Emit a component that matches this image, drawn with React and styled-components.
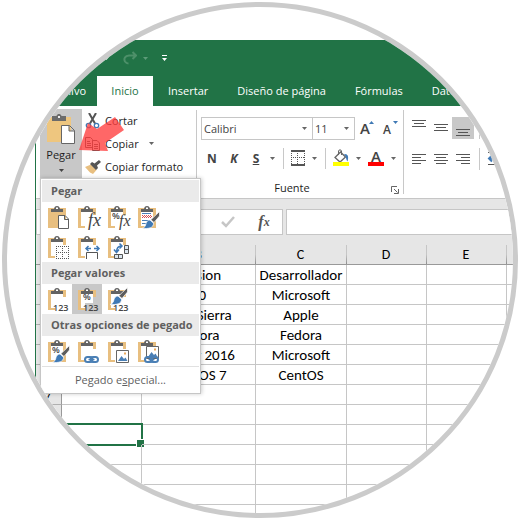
import React from "react";
import styled, { createGlobalStyle } from "styled-components";

const commands = [
    { label: "Cortar", icon: "cut" },
    { label: "Copiar", icon: "copy", hasMenu: true },
    { label: "Copiar formato", icon: "format" },
];

const pasteGroups = [
    {
        title: "Pegar",
        options: [
            { name: "Pegar todo", icon: "paste" },
            { name: "Fórmulas", icon: "formulas" },
            { name: "Formato de números y fórmulas", icon: "numberFormulas" },
            { name: "Mantener formato de origen", icon: "source" },
            { name: "Sin bordes", icon: "noBorders" },
            { name: "Mantener ancho de columnas", icon: "widths" },
            { name: "Transponer", icon: "transpose" },
        ],
    },
    {
        title: "Pegar valores",
        options: [
            { name: "Valores", icon: "values" },
            { name: "Formato de números y valores", icon: "numberValues", selected: true },
            { name: "Formato de valores y origen", icon: "sourceValues" },
        ],
    },
    {
        title: "Otras opciones de pegado",
        options: [
            { name: "Formato", icon: "formatting" },
            { name: "Pegar vínculo", icon: "link" },
            { name: "Imagen", icon: "picture" },
            { name: "Imagen vinculada", icon: "linkedPicture" },
        ],
    },
];

const columns = ["A", "B", "C", "D", "E", "F"];
const widths = [26, 80, 114, 91, 80, 80, 80];

const rows = [
    ["Sistema", "Version", "Desarrollador"],
    ["Windows", "10", "Microsoft"],
    ["macOS", "OS X Sierra", "Apple"],
    ["Linux", "Fedora", "Fedora"],
    ["Windows", "Server 2016", "Microsoft"],
    ["Linux", "CentOS 7", "CentOS"],
    [], [], [], [], [], [], [],
];

const Caret = ({ color = "#666" }) => (
    <svg width="5" height="3" viewBox="0 0 5 3" aria-hidden="true">
        <path d="M0 0h5L2.5 3z" fill={color} />
    </svg>
);

const Brush = () => (
    <g stroke="#fff" strokeWidth=".7">
        <path d="M27.500 9.500v4.500L22 20.500 18.800 17.800z" fill="#5c5c5c" />
        <path d="M18 18l3.500 3.200c.4 4.500-5 5.800-11.500 5.300 3-1 3.500-2.500 4-5 .5-2 2-3.500 4-3.500z" fill="#3f79b5" />
    </g>
);

const Chain = () => (
    <g fill="none" stroke="#4a7fb5" strokeWidth="2">
        <rect x="13" y="21" width="7.500" height="5" rx="2.500" />
        <rect x="18.500" y="21" width="7.500" height="5" rx="2.500" />
        <path d="M16.500 23.500h6" strokeWidth="1.500" />
    </g>
);

const Picture = ({ y = 14 }) => (
    <g transform={`translate(0 ${y - 14})`}>
        <path d="M14.500 14.500h12v12h-12z" fill="#fff" stroke="#666" />
        <path d="M16 25l3.500-5 2.500 3 1.500-1.500L25.500 25z" fill="#4a7fb5" />
        <path d="M22 16.500h2v2h-2z" fill="#eaa95c" />
    </g>
);

const SheetCorner = () => (
    <path d="M16.500 13.500h6.500l3.500 3.500v9.500h-10zM22.500 13.500v4h4" fill="#fff" stroke="#5f5f5f" />
);

const IconText = styled.text`
    font-family: ${({ $serif }) => ($serif ? '"Liberation Serif", serif' : '"Open Sans", sans-serif')};
    font-size: ${({ $size }) => $size}px;
    font-style: ${({ $serif }) => ($serif ? "italic" : "normal")};
    font-weight: ${({ $serif }) => ($serif ? 400 : 600)};
    fill: #444;
`;

const optionArt = {
    paste: <SheetCorner />,
    formulas: <IconText $serif $size={18} x="16" y="24">fx</IconText>,
    numberFormulas: (
        <>
            <IconText $size={9} x="10" y="17">%</IconText>
            <IconText $serif $size={16} x="17" y="24">fx</IconText>
        </>
    ),
    source: (
        <>
            <path d="M10 11.500h9M10 18.500h8M10 21.500h4" stroke="#4a7fb5" />
            <path d="M10 13.500h9M10 15.500h9" stroke="#d94f4f" strokeDasharray="1 1" />
            <path d="M11 14.500h9" stroke="#d94f4f" strokeDasharray="1 1" />
            <Brush />
        </>
    ),
    noBorders: (
        <path
            d="M14.500 14v13M20.500 14v13M26.500 14v13M14 14.500h13M14 20.500h13M14 26.500h13"
            stroke="#555"
            strokeDasharray="1 1"
        />
    ),
    widths: (
        <>
            <path d="M14.500 27v-6.500h11V27" fill="#fff" stroke="#555" />
            <path d="M14 16.500h5M22 16.500h5M16.500 14l-2.500 2.500 2.500 2.500M24.500 14l2.500 2.500-2.500 2.500" fill="none" stroke="#3f79b5" strokeWidth="1.500" />
        </>
    ),
    transpose: (
        <>
            <path d="M22.500 13.500h4v8h-4zM22.500 17.500h4" fill="#dbe6ef" stroke="#555" />
            <path d="M12.500 22.500h8v4h-8zM16.500 22.500v4" fill="#dbe6ef" stroke="#555" />
            <path d="M14.500 20.500c0-4 1-6.500 5-6.500M17.500 11.500l2.500 2.500-2.500 2.500M12 17.500l2.500 3 2.500-3" fill="none" stroke="#3f79b5" strokeWidth="1.500" />
        </>
    ),
    values: <IconText $size={9} x="11" y="27">123</IconText>,
    numberValues: (
        <>
            <IconText $size={9} x="11" y="16">%</IconText>
            <IconText $size={9} x="11" y="27">123</IconText>
        </>
    ),
    sourceValues: (
        <>
            <g transform="translate(-2 -6)"><Brush /></g>
            <IconText $size={9} x="11" y="27">123</IconText>
        </>
    ),
    formatting: (
        <>
            <IconText $size={9} x="10" y="17">%</IconText>
            <Brush />
        </>
    ),
    link: <Chain />,
    picture: <Picture />,
    linkedPicture: (
        <>
            <Picture y={10} />
            <Chain />
        </>
    ),
};

// Options whose drawing fills the whole board keep its lower right corner
const wholeBoards = ["source", "formatting"];

const OptionIcon = ({ name, selected }) => (
    <svg width="30" height="30" viewBox="0 0 30 30" aria-hidden="true">
        <path d="M6 6h18v20H6z" fill="#e8bf80" />
        {name !== "paste" && <path d="M9 8h12v16H9z" fill="#fff" />}
        {name !== "paste" && !wholeBoards.includes(name) && (
            <>
                <path d="M13 18h14v9H13z" fill={selected ? "#c8c8c8" : "#fff"} />
                <path d="M20 13h7v14h-7z" fill={selected ? "#c8c8c8" : "#fff"} />
            </>
        )}
        {selected && <path d="M9 8h12v11H9z" fill="#fff" />}
        <path d="M9 10V7h3c.3-2 1.200-3 3-3s2.700 1 3 3h3v3z" fill="#636363" />
        <path d="M14 5.500h2V7h-2z" fill="#fff" />
        {optionArt[name]}
    </svg>
);

const CommandIcon = ({ name }) => (
    <svg width="16" height="16" viewBox="0 0 16 16" aria-hidden="true">
        {name === "cut" && (
            <>
                <path d="M4 0 10 10.500M11 0 5 10.500" stroke="#555" strokeWidth="2" />
                <circle cx="3.500" cy="12.500" r="2.200" fill="none" stroke="#3f79b5" strokeWidth="1.300" />
                <circle cx="11.500" cy="12.500" r="2.200" fill="none" stroke="#3f79b5" strokeWidth="1.300" />
            </>
        )}
        {name === "copy" && (
            <>
                <path d="M.5 1.500h5l2 2v8h-7z" fill="#fff" stroke="#555" />
                <path d="M7.500 4.500h4.500l2.500 2.500v7.500h-7z" fill="#fff" stroke="#555" />
                <path d="M2 5.500h3M2 7.500h4M2 9.500h4M9 8.500h4M9 10.500h4M9 12.500h4" stroke="#555" />
            </>
        )}
        {name === "format" && (
            <>
                <path d="M0 8 6 5.500l5.500 5.500-3.500 4L5 13.500z" fill="#e8bf80" />
                <path d="M5 5l2-2 2.500 1.500L14 1l2 2-4 3.500L13 9l-2 2z" fill="#555" />
            </>
        )}
    </svg>
);

const LetterIcon = ({ size, up }) => (
    <svg width="20" height="22" viewBox="0 0 20 22" aria-hidden="true">
        <IconText $size={size} x={up ? 3 : 2} y="17">A</IconText>
        <path d={up ? "M12 7h5l-2.500-3z" : "M12 4h5l-2.500 3z"} fill="#3f79b5" />
    </svg>
);

const LinesIcon = ({ d }) => (
    <svg width="22" height="22" viewBox="0 0 22 22" aria-hidden="true">
        <path d={d} stroke="#555" />
    </svg>
);

const PasteMenu = () => (
    <StMenu>
        {pasteGroups.map(({ title, options }) => (
            <section key={title}>
                <StMenuTitle>{title}</StMenuTitle>
                <StOptions>
                    {options.map(({ name, icon, selected }) => (
                        <StOption key={icon} title={name} aria-label={name} $selected={selected}>
                            <OptionIcon name={icon} selected={selected} />
                        </StOption>
                    ))}
                </StOptions>
            </section>
        ))}
        <StSpecial>Pegado e<u>s</u>pecial...</StSpecial>
    </StMenu>
);

const Clipboard = () => (
    <StClipboard>
        <StPasteWrap>
            <StPaste>
                <svg width="30" height="32" viewBox="0 0 30 32" aria-hidden="true">
                    <path d="M1 4h24v25H1z" fill="#eec67f" />
                    <path d="M6 8V3h4.500c.5-1.500 1.500-2 2.500-2s2 .5 2.500 2H20v5z" fill="#6b6b6b" />
                    <path d="M12 3h2v2h-2z" fill="#eee" />
                    <path d="M15.500 12.500h8l5 5v13h-13zM23 12.500V18h5.500" fill="#fff" stroke="#666" />
                </svg>
                <span>Pegar</span>
                <Caret color="#444" />
            </StPaste>
            <PasteMenu />
            <StArrow width="47" height="36" viewBox="0 0 47 36" aria-hidden="true">
                <path d="M0 34 9 7l9 6L36 1l9 13-19 13 3 8z" fill="#ff3c3c" fillOpacity=".78" />
            </StArrow>
        </StPasteWrap>
        <StCommands>
            {commands.map(({ label, icon, hasMenu }) => (
                <StCommand key={label}>
                    <CommandIcon name={icon} />
                    <span>{label}</span>
                    {hasMenu && <StCommandCaret><Caret /></StCommandCaret>}
                </StCommand>
            ))}
        </StCommands>
    </StClipboard>
);

const FontGroup = () => (
    <StGroup>
        <StRow>
            <StSelectBox $width={112}>
                <StSelect aria-label="Fuente"><option>Calibri</option></StSelect>
                <Caret />
            </StSelectBox>
            <StSelectBox $width={43} $joined>
                <StSelect aria-label="Tamaño de fuente"><option>11</option></StSelect>
                <Caret />
            </StSelectBox>
            <StTool $width={24} aria-label="Aumentar tamaño de fuente"><LetterIcon size={15} up /></StTool>
            <StTool $width={24} aria-label="Disminuir tamaño de fuente"><LetterIcon size={12} /></StTool>
        </StRow>
        <StRow>
            <StTool aria-label="Negrita"><b>N</b></StTool>
            <StTool aria-label="Cursiva"><b><i>K</i></b></StTool>
            <StTool aria-label="Subrayado"><b><u>S</u></b></StTool>
            <StTool $width={11} aria-label="Opciones de subrayado"><Caret /></StTool>
            <StRowDivider />
            <StTool aria-label="Bordes">
                <svg width="14" height="16" viewBox="0 0 14 16" aria-hidden="true">
                    <path d="M0 1h14M0 15h14" stroke="#555" strokeWidth="2" />
                    <path d="M.5 3v11M6.500 3v11M13.500 3v11M0 7.500h14" stroke="#555" strokeDasharray="1 1" />
                </svg>
            </StTool>
            <StTool $width={11} aria-label="Opciones de bordes"><Caret /></StTool>
            <StRowDivider />
            <StTool $width={24} aria-label="Color de relleno">
                <svg width="18" height="18" viewBox="0 0 18 18" aria-hidden="true">
                    <path d="M3 8.500 8.500 3l5 5L8 13z" fill="#fff" stroke="#666" strokeWidth="1.300" />
                    <path d="M6.500 6V2c0-1.500 3-1.500 3 0v4" fill="none" stroke="#666" />
                    <path d="M12 5c4-.5 5 2.500 3.500 7.500C14 11 14.500 8 12 5z" fill="#3f79b5" />
                    <path d="M1 13h16v4H1z" fill="#ff0" />
                </svg>
            </StTool>
            <StTool $width={11} aria-label="Opciones de relleno"><Caret /></StTool>
            <StTool $width={24} aria-label="Color de fuente">
                <svg width="18" height="18" viewBox="0 0 18 18" aria-hidden="true">
                    <IconText $size={15} x="4" y="13">A</IconText>
                    <path d="M1 13h16v4H1z" fill="red" />
                </svg>
            </StTool>
            <StTool $width={11} aria-label="Opciones de color"><Caret /></StTool>
        </StRow>
        <StGroupFooter>
            <span>Fuente</span>
            <StLauncher aria-label="Configuración de fuente">
                <svg width="8" height="8" viewBox="0 0 8 8" aria-hidden="true">
                    <path d="M.5 6V.5H6M3 3l3.500 3.500M7.500 3v4.500H3" fill="none" stroke="#666" />
                </svg>
            </StLauncher>
        </StGroupFooter>
    </StGroup>
);

const AlignGroup = () => (
    <StGroup>
        <StRow>
            <StTool aria-label="Alinear en la parte superior"><LinesIcon d="M4 3.500h14M6 6.500h10M4 9.500h14" /></StTool>
            <StTool aria-label="Alinear en el medio"><LinesIcon d="M4 7.500h14M6 10.500h10M4 13.500h14" /></StTool>
            <StTool $active aria-label="Alinear en la parte inferior"><LinesIcon d="M4 12.500h14M6 15.500h10M4 18.500h14" /></StTool>
            <StRowDivider />
        </StRow>
        <StRow>
            <StTool aria-label="Alinear a la izquierda"><LinesIcon d="M4 6.500h14M4 9.500h9M4 12.500h14M4 15.500h9" /></StTool>
            <StTool aria-label="Centrar"><LinesIcon d="M4 6.500h14M6 9.500h10M4 12.500h14M6 15.500h10" /></StTool>
            <StTool aria-label="Alinear a la derecha"><LinesIcon d="M4 6.500h14M9 9.500h9M4 12.500h14M9 15.500h9" /></StTool>
            <StRowDivider />
            <StTool aria-label="Disminuir sangría">
                <svg width="16" height="14" viewBox="0 0 16 14" aria-hidden="true">
                    <path d="M2 .5h14M10 4.500h6M10 8.500h6M2 12.500h14" stroke="#555" />
                    <path d="M9 6.500H3M6 3.500l-3 3 3 3" fill="none" stroke="#3f79b5" strokeWidth="2" />
                </svg>
            </StTool>
        </StRow>
    </StGroup>
);

const Sheet = () => (
    <StTable>
        <colgroup>
            {widths.map((width, i) => <StCol key={i} $width={width} />)}
        </colgroup>
        <thead>
            <tr>
                <StColHead />
                {columns.map((name) => <StColHead key={name} scope="col">{name}</StColHead>)}
            </tr>
        </thead>
        <tbody>
            {rows.map((row, r) => (
                <tr key={r}>
                    <StRowHead scope="row">{r + 1}</StRowHead>
                    {columns.map((name, c) => (
                        <StCell key={name}>
                            {row[c]}
                            {r === 8 && c === 0 && <StCursor />}
                        </StCell>
                    ))}
                </tr>
            ))}
        </tbody>
    </StTable>
);

const App = () => {
    return (
        <StPage>
            <GlobalStyle />
            <StLens>
                <StWindow>
                    <StTitleBar>
                        <StQuick aria-label="Deshacer">
                            <svg width="14" height="14" viewBox="0 0 14 14" aria-hidden="true">
                                <path d="M1 5h7a4 4 0 0 1 0 8M5 1 1 5l4 4" fill="none" stroke="#fff" strokeWidth="2" />
                            </svg>
                            <Caret color="#fff" />
                        </StQuick>
                        <StQuick aria-label="Rehacer">
                            <svg width="14" height="14" viewBox="0 0 14 14" aria-hidden="true">
                                <path d="M13 4.500H6C2 4.500.5 8 2 10.500 3 12 4 12.500 5.500 12.500M9.500 1 13 4.500 9.500 8" fill="none" stroke="#4d9069" strokeWidth="2" />
                            </svg>
                            <Caret color="#5d9c79" />
                        </StQuick>
                        <StQuick aria-label="Personalizar barra de acceso rápido">
                            <svg width="5" height="6" viewBox="0 0 5 6" aria-hidden="true">
                                <path d="M0 0h5v1H0zM0 3h5L2.500 6z" fill="#fff" />
                            </svg>
                        </StQuick>
                    </StTitleBar>
                    <StTabs>
                        <StTab>Archivo</StTab>
                        <StTab $active>Inicio</StTab>
                        <StTab>Insertar</StTab>
                        <StTab>Diseño de página</StTab>
                        <StTab>Fórmulas</StTab>
                        <StTab>Datos</StTab>
                    </StTabs>
                    <StRibbon>
                        <Clipboard />
                        <StDivider />
                        <FontGroup />
                        <StDivider />
                        <AlignGroup />
                    </StRibbon>
                    <StFormulaBar>
                        <StNameBox aria-label="Cuadro de nombres" defaultValue="A9" />
                        <StFormulaTools>
                            <StFormulaButton aria-label="Cancelar">
                                <svg width="12" height="12" viewBox="0 0 12 12" aria-hidden="true">
                                    <path d="M1 1l10 10M11 1 1 11" stroke="#c6c6c6" strokeWidth="2" />
                                </svg>
                            </StFormulaButton>
                            <StFormulaButton aria-label="Introducir">
                                <svg width="14" height="12" viewBox="0 0 14 12" aria-hidden="true">
                                    <path d="M1 6l4 4 8-9" fill="none" stroke="#c6c6c6" strokeWidth="2.500" />
                                </svg>
                            </StFormulaButton>
                            <StFormulaButton><b><i>f</i></b><small><b><i>x</i></b></small></StFormulaButton>
                        </StFormulaTools>
                        <StFormulaInput aria-label="Barra de fórmulas" />
                    </StFormulaBar>
                    <Sheet />
                </StWindow>
            </StLens>
        </StPage>
    );
};

export default App;

const GlobalStyle = createGlobalStyle`
    * {
        box-sizing: border-box;
    }
    body {
        margin: 0;
        background: #fff;
        font-family: "Open Sans", "Noto Sans", sans-serif;
        font-size: 11px;
        color: #1e1e1e;
    }
    button, input, select {
        margin: 0;
        padding: 0;
        border: none;
        border-radius: 0;
        background: none;
        font: inherit;
        color: inherit;
    }
    svg {
        display: block;
        flex-shrink: 0;
    }
`;

const StPage = styled.main`
    padding: 2px;
`;

const StLens = styled.div`
    width: 100%;
    aspect-ratio: 1;
    padding: 33px 0 0 28px;
    border: 5px solid #cbcbcb;
    border-radius: 50%;
    overflow: hidden;
`;

const StWindow = styled.div`
    border-left: 1px solid #217346;
`;

const StTitleBar = styled.header`
    display: flex;
    align-items: center;
    gap: 10px;
    height: 36px;
    padding-left: 48px;
    background: #217346;
`;

const StQuick = styled.button`
    display: flex;
    align-items: center;
    gap: 6px;
    padding-right: 4px;
`;

const StTabs = styled.nav`
    display: flex;
    gap: 1px;
    height: 30px;
    background: #217346;
`;

const StTab = styled.button`
    flex-shrink: 0;
    min-width: 56px;
    padding: 0 14px 2px;
    background: ${({ $active }) => ($active ? "#fff" : "transparent")};
    color: ${({ $active }) => ($active ? "#217346" : "#fff")};
    white-space: nowrap;
    &:first-child {
        width: 60px;
        padding: 0 10px 2px;
        text-align: right;
    }
`;

const StRibbon = styled.div`
    display: flex;
    height: 93px;
    border-bottom: 1px solid #c6c6c6;
`;

const StDivider = styled.div`
    flex-shrink: 0;
    width: 1px;
    margin: 4px 0;
    background: #c8c8c8;
`;

const StClipboard = styled.div`
    display: flex;
    flex-shrink: 0;
    width: 160px;
    padding: 3px 0 0 4px;
`;

const StPasteWrap = styled.div`
    position: relative;
    width: 42px;
`;

const StPaste = styled.button`
    display: flex;
    flex-direction: column;
    align-items: center;
    width: 100%;
    height: 70px;
    padding-top: 4px;
    background: #c8c8c8;
    line-height: 20px;
    svg:last-child {
        margin-top: 4px;
    }
`;

const StArrow = styled.svg`
    position: absolute;
    top: 7px;
    left: 39px;
    z-index: 3;
`;

const StCommands = styled.div`
    display: flex;
    flex-direction: column;
    padding-left: 3px;
`;

const StCommand = styled.button`
    display: flex;
    align-items: center;
    gap: 4px;
    height: 23px;
    white-space: nowrap;
`;

const StCommandCaret = styled.span`
    padding-left: 6px;
`;

const StMenu = styled.div`
    position: absolute;
    top: 69px;
    left: 0;
    z-index: 2;
    width: 161px;
    padding: 1px;
    border: 1px solid #c6c6c6;
    background: #fff;
    box-shadow: 1px 0 4px rgba(0, 0, 0, 0.2);
    color: #5f5f5f;
`;

const StMenuTitle = styled.h3`
    height: 22px;
    margin: 0;
    padding-left: 9px;
    background: #eaeaea;
    font-size: 11px;
    font-weight: 700;
    line-height: 22px;
    white-space: nowrap;
`;

const StOptions = styled.div`
    display: flex;
    flex-wrap: wrap;
    padding-right: 30px;
`;

const StOption = styled.button`
    width: 30px;
    height: 30px;
    background: ${({ $selected }) => ($selected ? "#c8c8c8" : "transparent")};
`;

const StSpecial = styled.button`
    width: 100%;
    height: 26px;
    border-top: 1px solid #e1e1e1;
    text-align: center;
`;

const StGroup = styled.div`
    display: flex;
    flex-direction: column;
    flex-shrink: 0;
    gap: 9px;
    min-width: 206px;
    padding: 11px 0 0 4px;
`;

const StRow = styled.div`
    display: flex;
    height: 22px;
`;

const StRowDivider = styled.div`
    width: 1px;
    margin: 0 3px 0 5px;
    background: #c8c8c8;
`;

const StSelectBox = styled.div`
    display: flex;
    align-items: center;
    width: ${({ $width }) => $width}px;
    height: 23px;
    margin-left: ${({ $joined }) => ($joined ? -1 : 0)}px;
    padding: 0 5px 0 2px;
    border: 1px solid #c6c6c6;
`;

const StSelect = styled.select`
    flex: 1;
    min-width: 0;
    appearance: none;
    color: #444;
`;

const StTool = styled.button`
    display: flex;
    align-items: center;
    justify-content: center;
    flex-shrink: 0;
    width: ${({ $width }) => $width || 22}px;
    background: ${({ $active }) => ($active ? "#c8c8c8" : "transparent")};
    color: #444;
    font-size: 12px;
`;

const StGroupFooter = styled.div`
    display: flex;
    align-items: center;
    height: 22px;
    span {
        flex: 1;
        text-align: center;
    }
`;

const StLauncher = styled.button`
    padding: 4px 4px 0 8px;
`;

const StFormulaBar = styled.div`
    display: flex;
    height: 46px;
    padding: 10px 0;
    background: #e6e6e6;
`;

const StNameBox = styled.input`
    width: 134px;
    margin-right: 4px;
    padding: 0 6px;
    border: 1px solid #c6c6c6;
    background: #fff;
`;

const StFormulaTools = styled.div`
    display: flex;
    flex-shrink: 0;
    margin-right: 3px;
    border: 1px solid #c6c6c6;
    border-left: none;
    background: #fff;
`;

const StFormulaButton = styled.button`
    display: flex;
    align-items: center;
    justify-content: center;
    width: 36px;
    color: #555;
    font-family: "Liberation Serif", serif;
    font-size: 16px;
    small {
        font-size: 12px;
    }
`;

const StFormulaInput = styled.input`
    flex: 1;
    min-width: 0;
    border: 1px solid #c6c6c6;
    background: #fff;
`;

const StTable = styled.table`
    width: 551px;
    min-width: 100%;
    table-layout: fixed;
    border-collapse: separate;
    border-spacing: 0;
    font-family: Carlito, Lato, sans-serif;
    font-size: 15px;
    line-height: 17px;
    color: #000;
`;

const StCol = styled.col`
    width: ${({ $width }) => $width}px;
`;

const StColHead = styled.th`
    height: 20px;
    padding: 0 2px 0 0;
    border-bottom: 1px solid #999;
    background: linear-gradient(#c6c6c6 50%, #8f8f8f) right / 1px 100% no-repeat #e6e6e6;
    font-size: 14px;
    font-weight: 400;
`;

const StRowHead = styled.th`
    height: 20px;
    padding: 0;
    border-right: 1px solid #999;
    border-bottom: 1px solid #b0b0b0;
    background: #e6e6e6;
    font-size: 14px;
    font-weight: 400;
`;

const StCell = styled.td`
    position: relative;
    height: 20px;
    padding: 2px 0 0;
    border-right: 1px solid #c6c6c6;
    border-bottom: 1px solid #c6c6c6;
    text-align: center;
    white-space: nowrap;
`;

// Selection frame with its fill handle in the lower right corner
const StCursor = styled.div`
    position: absolute;
    inset: -2px;
    border: 2px solid #217346;
    &::after {
        content: "";
        position: absolute;
        right: -4px;
        bottom: -4px;
        width: 7px;
        height: 7px;
        border: 1px solid #fff;
        background: #217346;
    }
`;
